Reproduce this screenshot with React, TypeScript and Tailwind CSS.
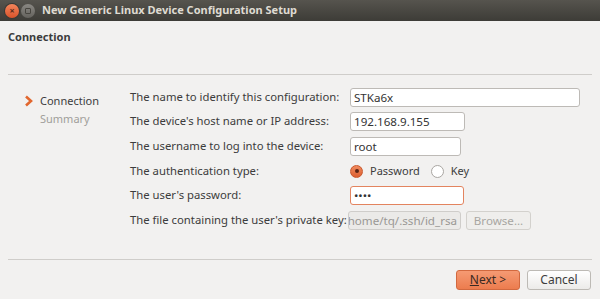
import { ReactNode } from "react";

const font = { fontFamily: '"Noto Sans", "Open Sans", sans-serif' };

function Row({ label, children }: { label: string; children: ReactNode }) {
  return (
    <div className="flex h-[24.6px] items-center">
      <div className="w-[220px] shrink-0 whitespace-nowrap text-[11.3px] text-[#3c3c3c]">{label}</div>
      {children}
    </div>
  );
}

function Field({ value, width, focus, disabled }: { value: string; width: string; focus?: boolean; disabled?: boolean }) {
  return (
    <div
      className={`flex h-[19px] items-center overflow-hidden whitespace-nowrap rounded-[3px] border px-[3px] text-[11.6px] ${width} ${
        focus
          ? "border-[#e3845f] bg-white text-[#333]"
          : disabled
          ? "justify-end border-[#cfcdca] bg-[#ebeae8] text-[#9a9895]"
          : "border-[#bdbab6] bg-white text-[#333]"
      }`}
    >
      <span className="shrink-0">{value}</span>
    </div>
  );
}

export default function App() {
  return (
    <div className="flex h-[299px] w-[600px] flex-col overflow-hidden bg-[#f2f1f0]" style={font}>
      {/* title bar */}
      <div className="flex h-[21px] shrink-0 items-center bg-gradient-to-b from-[#56544e] to-[#3d3c37] pl-[5px]">
        <div className="flex h-[14px] w-[14px] items-center justify-center rounded-full bg-gradient-to-b from-[#f3845a] to-[#d9532a] shadow-[0_0_0_1px_#3a3935]">
          <span className="text-[9px] font-bold leading-none text-[#5a2a1a]">×</span>
        </div>
        <div className="ml-[2px] flex h-[14px] w-[14px] items-center justify-center rounded-full bg-gradient-to-b from-[#8a8883] to-[#64625d]">
          <div className="h-[6px] w-[6px] rounded-[1px] border border-[#47453f]" />
        </div>
        <div className="ml-[7px] whitespace-nowrap text-[11px] font-bold text-[#dfdbd2]">New Generic Linux Device Configuration Setup</div>
      </div>

      {/* header */}
      <div className="h-[53px] shrink-0 px-[8px] pt-[8px]">
        <div className="text-[11px] font-bold text-[#3c3c3c]">Connection</div>
      </div>
      <div className="mx-[8px] h-[2px] shrink-0 border-t border-[#cfcdca] border-b-white" />

      {/* body */}
      <div className="flex h-[183px] shrink-0 pt-[9px]">
        <div className="w-[130px] shrink-0 pl-[24px] pt-[8px]">
          <div className="flex items-center text-[11px] text-[#3c3c3c]">
            <svg width="10" height="12" viewBox="0 0 10 12" className="mr-[6px]">
              <path d="M2 1.5 L7 6 L2 10.5" fill="none" stroke="#e2672e" strokeWidth="2.6" strokeLinejoin="miter" />
            </svg>
            Connection
          </div>
          <div className="pl-[16px] pt-[1px] text-[11px] text-[#a09e9a]">Summary</div>
        </div>
        <div className="flex flex-col">
          <Row label="The name to identify this configuration:">
            <Field value="STKa6x" width="w-[230px]" />
          </Row>
          <Row label="The device's host name or IP address:">
            <Field value="192.168.9.155" width="w-[115px]" />
          </Row>
          <Row label="The username to log into the device:">
            <Field value="root" width="w-[111px]" />
          </Row>
          <Row label="The authentication type:">
            <div className="flex items-center text-[11px] text-[#3c3c3c]">
              <div className="flex h-[13px] w-[13px] items-center justify-center rounded-full border border-[#c9572c] bg-gradient-to-b from-[#f08a5d] to-[#dc5f30]">
                <div className="h-[4px] w-[4px] rounded-full bg-[#5a2414]" />
              </div>
              <span className="ml-[7px]">Password</span>
              <div className="ml-[11px] h-[13px] w-[13px] rounded-full border border-[#a9a6a2] bg-white" />
              <span className="ml-[7px]">Key</span>
            </div>
          </Row>
          <Row label="The user's password:">
            <Field value="••••" width="w-[114px]" focus />
          </Row>
          <Row label="The file containing the user's private key:">
            <div className="-ml-[2px] flex items-center">
              <Field value="/home/tq/.ssh/id_rsa" width="w-[113px]" disabled />
              <div className="ml-[5px] flex h-[19px] w-[65px] items-center justify-center rounded-[3px] border border-[#d3d1cd] bg-[#efeeec] text-[11.6px] text-[#a8a6a2]">
                Browse...
              </div>
            </div>
          </Row>
        </div>
      </div>

      <div className="mx-[8px] h-[2px] shrink-0 border-t border-[#cfcdca] border-b-white" />

      {/* footer */}
      <div className="flex flex-1 items-start justify-end gap-[7px] pr-[9px] pt-[9px]">
        <div className="flex h-[20px] w-[64px] items-center justify-center rounded-[3px] border border-[#d2693f] bg-gradient-to-b from-[#f59a73] to-[#ec7c4e] text-[12px] text-[#3a2a22]">
          <span>
            <span className="underline">N</span>ext &gt;
          </span>
        </div>
        <div className="flex h-[20px] w-[64px] items-center justify-center rounded-[3px] border border-[#bdbab5] bg-gradient-to-b from-white to-[#ecebe9] text-[12px] text-[#3c3c3c]">
          Cancel
        </div>
      </div>
    </div>
  );
}
